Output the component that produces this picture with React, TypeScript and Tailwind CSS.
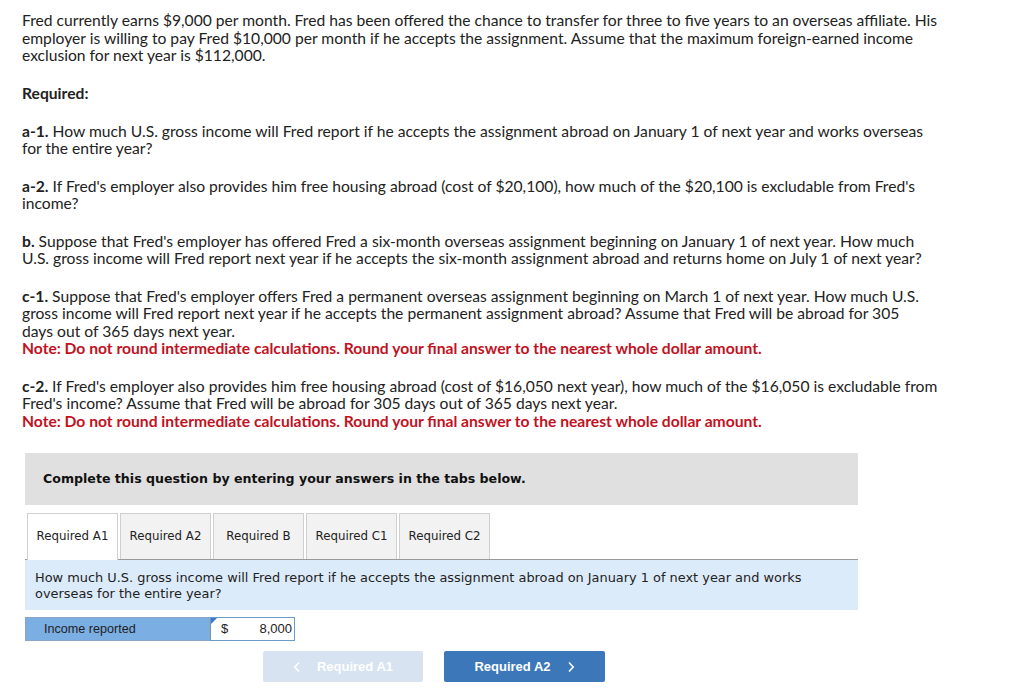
import React from "react";

const body = "font-['Lato','Open_Sans',sans-serif] text-[15.65px] leading-[17.5px] text-[#222]";

function Para({ lines, className = "" }: { lines: React.ReactNode[]; className?: string }) {
  return (
    <div className={className}>
      {lines.map((l, i) => (
        <div key={i} className="whitespace-nowrap">
          {l}
        </div>
      ))}
    </div>
  );
}

const note = (
  <span className="font-bold text-[#c1121f]">
    Note: Do not round intermediate calculations. Round your final answer to the nearest whole dollar amount.
  </span>
);

const tabs = ["Required A1", "Required A2", "Required B", "Required C1", "Required C2"];

export default function App() {
  return (
    <div className="w-[1024px] h-[688px] bg-white overflow-hidden">
      <div className={`${body} pl-[22px] pt-[12px]`}>
        <Para
          lines={[
            "Fred currently earns $9,000 per month. Fred has been offered the chance to transfer for three to five years to an overseas affiliate. His",
            "employer is willing to pay Fred $10,000 per month if he accepts the assignment. Assume that the maximum foreign-earned income",
            "exclusion for next year is $112,000.",
          ]}
        />
        <div className="mt-[20.5px] font-bold">Required:</div>
        <Para
          className="mt-[20px]"
          lines={[
            <>
              <b>a-1.</b> How much U.S. gross income will Fred report if he accepts the assignment abroad on January 1 of next year and works overseas
            </>,
            "for the entire year?",
          ]}
        />
        <Para
          className="mt-[20px]"
          lines={[
            <>
              <b>a-2.</b> If Fred's employer also provides him free housing abroad (cost of $20,100), how much of the $20,100 is excludable from Fred's
            </>,
            "income?",
          ]}
        />
        <Para
          className="mt-[20px]"
          lines={[
            <>
              <b>b.</b> Suppose that Fred's employer has offered Fred a six-month overseas assignment beginning on January 1 of next year. How much
            </>,
            "U.S. gross income will Fred report next year if he accepts the six-month assignment abroad and returns home on July 1 of next year?",
          ]}
        />
        <Para
          className="mt-[20px]"
          lines={[
            <>
              <b>c-1.</b> Suppose that Fred's employer offers Fred a permanent overseas assignment beginning on March 1 of next year. How much U.S.
            </>,
            "gross income will Fred report next year if he accepts the permanent assignment abroad? Assume that Fred will be abroad for 305",
            "days out of 365 days next year.",
            note,
          ]}
        />
        <Para
          className="mt-[20px]"
          lines={[
            <>
              <b>c-2.</b> If Fred's employer also provides him free housing abroad (cost of $16,050 next year), how much of the $16,050 is excludable from
            </>,
            "Fred's income? Assume that Fred will be abroad for 305 days out of 365 days next year.",
            note,
          ]}
        />
      </div>

      <div className="ml-[25px] w-[833px] mt-[23px]">
        <div className="h-[52px] bg-[#e0e0e0] flex items-center pl-[18px] font-['DejaVu_Sans','Verdana',sans-serif] font-bold text-[12.6px] text-[#111]">
          Complete this question by entering your answers in the tabs below.
        </div>

        <div className="mt-[8px] flex items-end gap-[2px] pl-[2px] border-b border-[#9a9a9a] font-['DejaVu_Sans','Verdana',sans-serif] text-[11.8px] text-[#222]">
          {tabs.map((t, i) => (
            <div
              key={t}
              className={`w-[91px] flex items-center justify-center border border-[#d0d0d0] border-b-0 ${
                i === 0 ? "bg-white -mb-px h-[47px] border-[#bdbdbd]" : "h-[46px] bg-[#f2f2f2]"
              }`}
            >
              {t}
            </div>
          ))}
        </div>

        <div className="h-[50px] bg-[#dcebf9] pl-[10px] pt-[10px] font-['DejaVu_Sans','Verdana',sans-serif] text-[12.9px] leading-[16px] text-[#222]">
          <div className="whitespace-nowrap">
            How much U.S. gross income will Fred report if he accepts the assignment abroad on January 1 of next year and works
          </div>
          <div>overseas for the entire year?</div>
        </div>

        <div className="mt-[7px] flex font-['Liberation_Sans',Arial,sans-serif] text-[13px] text-[#222]">
          <div className="w-[185px] h-[24px] bg-[#7baee2] border border-[#8aa6c4] pl-[18px] flex items-center text-[12.6px]">
            Income reported
          </div>
          <div className="relative w-[85px] h-[24px] bg-white border border-[#6e9acb] flex items-center pl-[10px] pr-[2px]">
            <span className="absolute left-0 top-0 w-0 h-0 border-t-[6px] border-r-[6px] border-t-[#3a7bc8] border-r-transparent" />
            <span>$</span>
            <span className="ml-auto">8,000</span>
          </div>
        </div>

        <div className="mt-[10px] flex gap-[21px] pl-[238px] font-['Liberation_Sans',Arial,sans-serif] font-bold text-[13px]">
          <button className="w-[160px] h-[31px] rounded-[2px] bg-[#d7e3f0] text-white flex items-center justify-center gap-[16px]">
            <svg width="8" height="12" viewBox="0 0 8 12" fill="none" stroke="white" strokeWidth="1.6">
              <path d="M6 1.5 1.8 6 6 10.5" />
            </svg>
            Required A1
          </button>
          <button className="w-[161px] h-[31px] rounded-[2px] bg-[#3c78b9] text-white flex items-center justify-center gap-[16px]">
            Required A2
            <svg width="8" height="12" viewBox="0 0 8 12" fill="none" stroke="white" strokeWidth="1.6">
              <path d="M2 1.5 6.2 6 2 10.5" />
            </svg>
          </button>
        </div>
      </div>
    </div>
  );
}
